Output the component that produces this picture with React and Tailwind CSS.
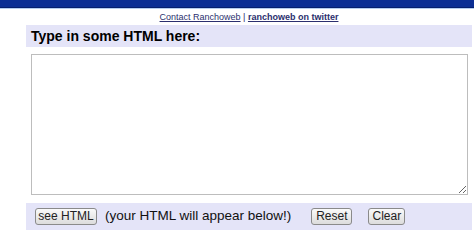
import React from 'react';

// bouton gris façon navigateur ancien
const OldButton = ({ children, className = '' }) => (
  <button
    type="button"
    className={`h-[17px] px-0 flex items-center justify-center whitespace-nowrap rounded-[3px] border border-[#8a8a8a] bg-gradient-to-b from-[#fafafa] to-[#dcdcdc] text-[12px] leading-[15px] text-[#222] ${className}`}
  >
    {children}
  </button>
);

const App = () => {
  return (
    <div className="w-[474px] h-[232px] bg-white overflow-hidden font-['Liberation_Sans',Arial,sans-serif]">
      {/* barre bleue en haut */}
      <div className="h-[8px] bg-[#0b2e94] border-b border-[#061f6e]" />
      <div className="h-[1px] bg-[#b4cdf0]" />

      <div className="ml-[26px] w-[446px]">
        <div className="h-[14px] mt-[2px] text-center text-[9px] leading-[13px] text-[#2b2f6e]">
          <a href="#" className="underline">Contact Ranchoweb</a>
          {' | '}
          <a href="#" className="underline font-bold">ranchoweb on twitter</a>
        </div>

        <div className="h-[22px] bg-[#e4e4f8] pl-[5px] text-[14px] leading-[22px] font-bold text-black">
          Type in some HTML here:
        </div>

        <div className="px-[5px] pt-[7px]">
          <textarea className="block w-[437px] h-[141px] border border-[#bdbdbd] bg-white resize outline-none" />
        </div>

        <div className="mt-[8px] h-[27px] bg-[#e4e4f8] flex items-center pl-[9px]">
          <OldButton className="w-[62px]">see HTML</OldButton>
          <span className="ml-[8px] text-[13.5px] text-[#111] whitespace-nowrap">(your HTML will appear below!)</span>
          <OldButton className="ml-[20px] w-[41px]">Reset</OldButton>
          <OldButton className="ml-[16px] w-[37px]">Clear</OldButton>
        </div>
      </div>
    </div>
  );
};

export default App;
